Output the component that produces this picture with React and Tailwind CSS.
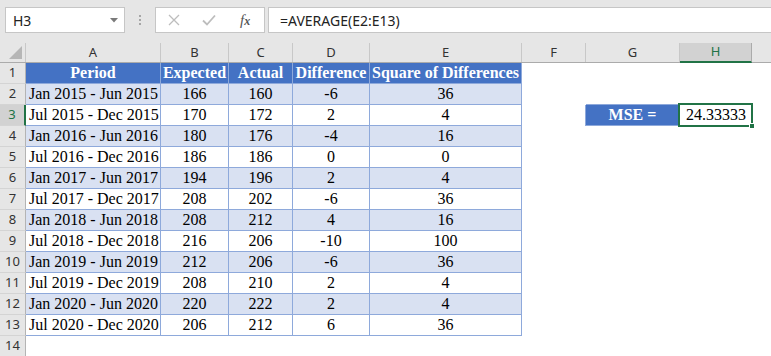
import React from 'react';

const rows = [
  ['Jan 2015 - Jun 2015', 166, 160, -6, 36],
  ['Jul 2015 - Dec 2015', 170, 172, 2, 4],
  ['Jan 2016 - Jun 2016', 180, 176, -4, 16],
  ['Jul 2016 - Dec 2016', 186, 186, 0, 0],
  ['Jan 2017 - Jun 2017', 194, 196, 2, 4],
  ['Jul 2017 - Dec 2017', 208, 202, -6, 36],
  ['Jan 2018 - Jun 2018', 208, 212, 4, 16],
  ['Jul 2018 - Dec 2018', 216, 206, -10, 100],
  ['Jan 2019 - Jun 2019', 212, 206, -6, 36],
  ['Jul 2019 - Dec 2019', 208, 210, 2, 4],
  ['Jan 2020 - Jun 2020', 220, 222, 2, 4],
  ['Jul 2020 - Dec 2020', 206, 212, 6, 36],
];

const colWidths = ['w-[135px]', 'w-[68px]', 'w-[64px]', 'w-[77px]', 'w-[152px]', 'w-[64px]', 'w-[94px]', 'w-[72px]'];
const letters = ['A', 'B', 'C', 'D', 'E', 'F', 'G', 'H'];
const heads = ['Period', 'Expected', 'Actual', 'Difference', 'Square of Differences'];

const sans = "font-['Noto_Sans',sans-serif]";
const serif = "font-['Liberation_Serif',serif]";

const RowHeader = ({ n, selected }) => (
  <div
    className={`w-[26px] shrink-0 h-full flex items-center justify-center text-[13px] border-b border-[#d4d4d4] ${sans} ${
      selected
        ? 'bg-[#d2d2d2] text-[#217346] border-r-2 border-r-[#217346]'
        : 'bg-[#e6e6e6] text-[#333] border-r border-r-[#b4b4b4]'
    }`}
  >
    {n}
  </div>
);

const TableCell = ({ w, children, fill, head, align = 'center' }) => (
  <div
    className={`${w} shrink-0 h-full border-r border-b border-[#8ea9db] leading-[20px] whitespace-nowrap overflow-hidden text-[16px] ${serif} ${
      head ? 'bg-[#4472c4] text-white font-bold' : fill ? 'bg-[#d9e1f2] text-black' : 'bg-white text-black'
    } ${align === 'left' ? 'text-left pl-[3px]' : 'text-center'}`}
  >
    {children}
  </div>
);

export default function App() {
  return (
    <div className="w-[771px] h-[356px] overflow-hidden bg-white">
      {/* formula bar */}
      <div className="h-[43px] bg-[#e6e6e6] flex items-start pt-[7px] pl-[5px]">
        <div className={`w-[120px] h-[26px] shrink-0 bg-white border border-[#c6c6c6] flex items-center justify-between pl-[7px] pr-[6px] text-[14px] text-[#222] ${sans}`}>
          <span>H3</span>
          <svg width="8" height="5" viewBox="0 0 8 5">
            <path d="M0 0h8L4 4.5z" fill="#7a7a7a" />
          </svg>
        </div>
        <div className="w-[30px] h-[26px] shrink-0 flex flex-col items-center justify-center gap-[2px]">
          <div className="w-[2px] h-[2px] bg-[#a6a6a6]" />
          <div className="w-[2px] h-[2px] bg-[#a6a6a6]" />
          <div className="w-[2px] h-[2px] bg-[#a6a6a6]" />
        </div>
        <div className="w-[110px] h-[26px] shrink-0 bg-white border border-[#c6c6c6] flex items-center">
          <svg className="ml-[12px]" width="12" height="12" viewBox="0 0 12 12">
            <path d="M1 1l10 10M11 1L1 11" stroke="#bdbdbd" strokeWidth="1.3" fill="none" />
          </svg>
          <svg className="ml-[22px]" width="14" height="12" viewBox="0 0 14 12">
            <path d="M1 6.5l4 4L13 1.5" stroke="#bdbdbd" strokeWidth="1.8" fill="none" />
          </svg>
          <span className={`ml-[24px] italic text-[15px] text-[#555] ${serif}`}>
            f<span className="text-[12px] font-bold">x</span>
          </span>
        </div>
        <div className={`flex-1 h-[26px] ml-[3px] -mr-[4px] bg-white border border-[#c6c6c6] flex items-center pl-[11px] text-[14px] text-[#222] ${sans}`}>
          =AVERAGE(E2:E13)
        </div>
      </div>

      {/* column headers */}
      <div className={`h-[20px] flex bg-[#e6e6e6] border-b border-[#ababab] text-[13px] text-[#333] ${sans}`}>
        <div className="w-[26px] shrink-0 border-r border-[#c8c8c8] flex items-end justify-end pr-[3px] pb-[3px]">
          <svg width="13" height="13" viewBox="0 0 13 13">
            <path d="M13 0V13H0z" fill="#b6b6b6" />
          </svg>
        </div>
        {letters.map((l, i) =>
          l === 'H' ? (
            <div
              key={l}
              className={`${colWidths[i]} shrink-0 -mb-px bg-[#d2d2d2] border-r border-[#ababab] border-b-2 border-b-[#217346] text-[#217346] flex items-center justify-center`}
            >
              {l}
            </div>
          ) : (
            <div key={l} className={`${colWidths[i]} shrink-0 border-r border-[#c8c8c8] flex items-center justify-center`}>
              {l}
            </div>
          )
        )}
        <div className="flex-1" />
      </div>

      {/* row 1 header */}
      <div className="h-[21px] flex">
        <RowHeader n={1} />
        {heads.map((h, i) => (
          <TableCell key={h} w={colWidths[i]} head>
            {h}
          </TableCell>
        ))}
        <div className="flex-1" />
      </div>

      {rows.map((r, idx) => {
        const n = idx + 2;
        const fill = n % 2 === 0;
        return (
          <div key={n} className="h-[21px] flex">
            <RowHeader n={n} selected={n === 3} />
            {r.map((v, i) => (
              <TableCell key={i} w={colWidths[i]} fill={fill} align={i === 0 ? 'left' : 'center'}>
                {v}
              </TableCell>
            ))}
            {n === 3 ? (
              <>
                <div className="w-[64px] shrink-0 border-r border-[#8ea9db]" />
                <div className={`w-[94px] shrink-0 h-full bg-[#4472c4] border-r border-b border-[#8ea9db] text-white font-bold text-[16px] leading-[20px] text-center ${serif}`}>
                  MSE =
                </div>
                <div className={`w-[72px] shrink-0 h-full relative text-[16px] leading-[20px] text-center text-black ${serif}`}>
                  24.33333
                  <div className="absolute -left-[2px] -top-[2px] -right-[1px] -bottom-[1px] border-2 border-[#217346]" />
                  <div className="absolute -right-[3px] -bottom-[3px] w-[6px] h-[6px] bg-[#217346] border border-white" />
                </div>
              </>
            ) : n === 2 ? (
              <>
                <div className="w-[64px] shrink-0" />
                <div className="w-[94px] shrink-0 h-full border-b border-[#8ea9db]" />
              </>
            ) : null}
            <div className="flex-1" />
          </div>
        );
      })}

      {/* row 14 */}
      <div className="h-[21px] flex">
        <RowHeader n={14} />
        <div className="flex-1" />
      </div>
    </div>
  );
}
